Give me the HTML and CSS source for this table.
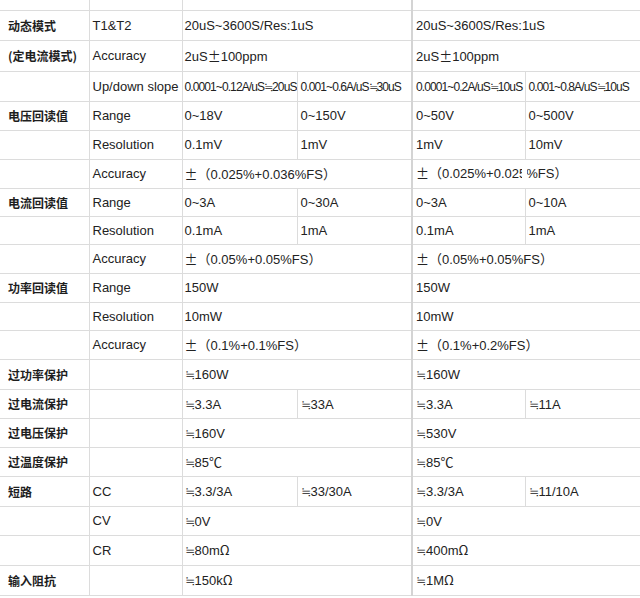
FILE: index.html
```html
<!DOCTYPE html>
<html lang="zh">
<head>
<meta charset="utf-8">
<title>规格参数</title>
<link rel="stylesheet" href="styles.css">
</head>
<body>
<table class="spec">
  <colgroup>
    <col class="c1"><col class="c2"><col class="c3"><col class="c4"><col class="c5"><col class="c6">
  </colgroup>
  <tbody>
    <tr class="h10 top">
      <td></td>
      <td></td>
      <td colspan="2"></td>
      <td colspan="2"></td>
    </tr>
    <tr class="h30">
      <td class="cn">动态模式</td><td>T1&amp;T2</td>
      <td colspan="2">20uS~3600S/Res:1uS</td><td colspan="2">20uS~3600S/Res:1uS</td>
    </tr>
    <tr class="h31">
      <td class="cn">(定电流模式)</td><td>Accuracy</td>
      <td colspan="2">2uS<span class="w">±</span>100ppm</td><td colspan="2">2uS<span class="w">±</span>100ppm</td>
    </tr>
    <tr class="h30">
      <td class="cn"></td><td>Up/down slope</td>
      <td class="sm">0.0001~0.12A/uS<span class="w">≒</span>20uS</td>
      <td class="sm">0.001~0.6A/uS<span class="w">≒</span>30uS</td>
      <td class="sm">0.0001~0.2A/uS<span class="w">≒</span>10uS</td>
      <td class="sm">0.001~0.8A/uS<span class="w">≒</span>10uS</td>
    </tr>
    <tr class="h29">
      <td class="cn">电压回读值</td><td>Range</td>
      <td>0~18V</td><td>0~150V</td><td>0~50V</td><td>0~500V</td>
    </tr>
    <tr class="h29">
      <td class="cn"></td><td>Resolution</td>
      <td>0.1mV</td><td>1mV</td><td>1mV</td><td>10mV</td>
    </tr>
    <tr class="h29">
      <td class="cn"></td><td>Accuracy</td>
      <td colspan="2"><span class="w">±（</span>0.025%+0.036%FS<span class="w">）</span></td>
      <td colspan="2"><span class="w">±（</span>0.025%+0.025<span class="mask"></span>%FS<span class="w">）</span></td>
    </tr>
    <tr class="h28">
      <td class="cn">电流回读值</td><td>Range</td>
      <td>0~3A</td><td>0~30A</td><td>0~3A</td><td>0~10A</td>
    </tr>
    <tr class="h28">
      <td class="cn"></td><td>Resolution</td>
      <td>0.1mA</td><td>1mA</td><td>0.1mA</td><td>1mA</td>
    </tr>
    <tr class="h29">
      <td class="cn"></td><td>Accuracy</td>
      <td colspan="2"><span class="w">±（</span>0.05%+0.05%FS<span class="w">）</span></td>
      <td colspan="2"><span class="w">±（</span>0.05%+0.05%FS<span class="w">）</span></td>
    </tr>
    <tr class="h29">
      <td class="cn">功率回读值</td><td>Range</td>
      <td colspan="2">150W</td><td colspan="2">150W</td>
    </tr>
    <tr class="h28">
      <td class="cn"></td><td>Resolution</td>
      <td colspan="2">10mW</td><td colspan="2">10mW</td>
    </tr>
    <tr class="h29">
      <td class="cn"></td><td>Accuracy</td>
      <td colspan="2"><span class="w">±（</span>0.1%+0.1%FS<span class="w">）</span></td>
      <td colspan="2"><span class="w">±（</span>0.1%+0.2%FS<span class="w">）</span></td>
    </tr>
    <tr class="h30">
      <td class="cn">过功率保护</td><td></td>
      <td colspan="2"><span class="w">≒</span>160W</td><td colspan="2"><span class="w">≒</span>160W</td>
    </tr>
    <tr class="h29">
      <td class="cn">过电流保护</td><td></td>
      <td><span class="w">≒</span>3.3A</td><td><span class="w">≒</span>33A</td>
      <td><span class="w">≒</span>3.3A</td><td><span class="w">≒</span>11A</td>
    </tr>
    <tr class="h29">
      <td class="cn">过电压保护</td><td></td>
      <td colspan="2"><span class="w">≒</span>160V</td><td colspan="2"><span class="w">≒</span>530V</td>
    </tr>
    <tr class="h29">
      <td class="cn">过温度保护</td><td></td>
      <td colspan="2"><span class="w">≒</span>85<span class="w">℃</span></td><td colspan="2"><span class="w">≒</span>85<span class="w">℃</span></td>
    </tr>
    <tr class="h30">
      <td class="cn">短路</td><td>CC</td>
      <td><span class="w">≒</span>3.3/3A</td><td><span class="w">≒</span>33/30A</td>
      <td><span class="w">≒</span>3.3/3A</td><td><span class="w">≒</span>11/10A</td>
    </tr>
    <tr class="h29">
      <td class="cn"></td><td>CV</td>
      <td colspan="2"><span class="w">≒</span>0V</td><td colspan="2"><span class="w">≒</span>0V</td>
    </tr>
    <tr class="h30">
      <td class="cn"></td><td>CR</td>
      <td colspan="2"><span class="w">≒</span>80m<span class="w">Ω</span></td><td colspan="2"><span class="w">≒</span>400m<span class="w">Ω</span></td>
    </tr>
    <tr class="h30">
      <td class="cn">输入阻抗</td><td></td>
      <td colspan="2"><span class="w">≒</span>150k<span class="w">Ω</span></td><td colspan="2"><span class="w">≒</span>1M<span class="w">Ω</span></td>
    </tr>
  </tbody>
</table>
</body>
</html>
```

FILE: styles.css
```css
html, body {
  margin: 0;
  padding: 0;
  background: #ffffff;
}
body {
  width: 640px;
  height: 598px;
  overflow: hidden;
  font-family: "Liberation Sans", Arial, "Noto Sans CJK SC", sans-serif;
  font-size: 13px;
  color: #222222;
}
.spec {
  border-collapse: collapse;
  table-layout: fixed;
  width: 640px;
}
.c1 { width: 89px; }
.c2 { width: 93px; }
.c3 { width: 115px; }
.c4 { width: 115px; }
.c5 { width: 113px; border-left: 2px solid #d4d4d4; }
.c6 { width: 115px; }

.spec td {
  border: 1px solid #dcdcdc;
  padding: 0 0 0 3px;
  vertical-align: middle;
  white-space: nowrap;
  overflow: hidden;
  line-height: 15px;
  box-sizing: border-box;
}
.spec td:first-child {
  border-left: none;
  padding-left: 8px;
}
.spec td:last-child {
  border-right: none;
}
.spec tr.top td {
  border-top: none;
}
.spec td:nth-child(3) { padding-left: 2px; }

.h10 td { height: 10px; }
.h28 td { height: 28px; }
.h29 td { height: 29px; }
.h30 td { height: 30px; }
.h31 td { height: 31px; }

.cn {
  font-family: "Noto Sans CJK SC", sans-serif;
  font-weight: 700;
  font-size: 12px;
  color: #1e1e1e;
}
.w {
  font-family: "Noto Sans CJK SC", sans-serif;
}
.sm {
  font-size: 12px;
  letter-spacing: -0.9px;
}
.sm .w { letter-spacing: -2px; }
.mask {
  display: inline-block;
  width: 5px;
  height: 15px;
  margin-left: -4px;
  margin-right: -1px;
  vertical-align: middle;
  background: #ffffff;
  position: relative;
}
```
